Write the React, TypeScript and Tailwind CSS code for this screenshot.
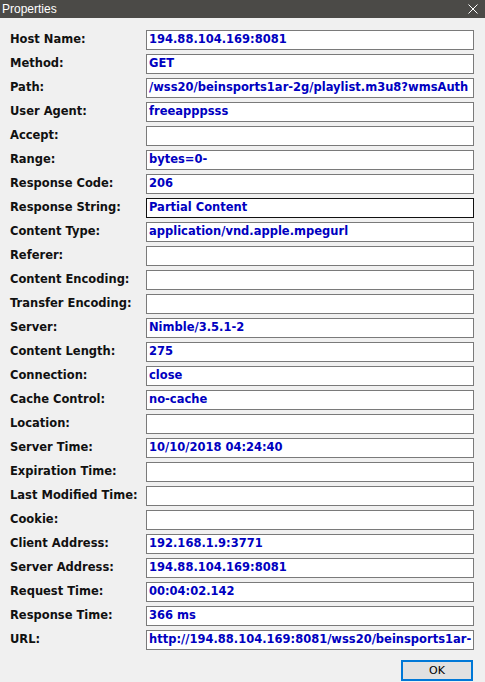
import React from "react";

const FIELDS: [string, string][] = [
  ["Host Name:", "194.88.104.169:8081"],
  ["Method:", "GET"],
  ["Path:", "/wss20/beinsports1ar-2g/playlist.m3u8?wmsAuth"],
  ["User Agent:", "freeapppsss"],
  ["Accept:", ""],
  ["Range:", "bytes=0-"],
  ["Response Code:", "206"],
  ["Response String:", "Partial Content"],
  ["Content Type:", "application/vnd.apple.mpegurl"],
  ["Referer:", ""],
  ["Content Encoding:", ""],
  ["Transfer Encoding:", ""],
  ["Server:", "Nimble/3.5.1-2"],
  ["Content Length:", "275"],
  ["Connection:", "close"],
  ["Cache Control:", "no-cache"],
  ["Location:", ""],
  ["Server Time:", "10/10/2018 04:24:40"],
  ["Expiration Time:", ""],
  ["Last Modified Time:", ""],
  ["Cookie:", ""],
  ["Client Address:", "192.168.1.9:3771"],
  ["Server Address:", "194.88.104.169:8081"],
  ["Request Time:", "00:04:02.142"],
  ["Response Time:", "366 ms"],
  ["URL:", "http://194.88.104.169:8081/wss20/beinsports1ar-"],
];

export default function App() {
  return (
    <div className="w-[485px] h-[682px] bg-[#f0f0f0] flex flex-col overflow-hidden">
      {/* title bar */}
      <div className="h-[18px] bg-[#4b4a47] flex items-center justify-between pl-[2px] pr-[7px]">
        <span className="text-white text-[12px] leading-none font-['Liberation_Sans',sans-serif]">Properties</span>
        <svg width="10" height="10" viewBox="0 0 10 10" className="text-white">
          <path d="M0.5 0.5 L9.5 9.5 M9.5 0.5 L0.5 9.5" stroke="currentColor" strokeWidth="1" fill="none" />
        </svg>
      </div>

      <div className="flex flex-col gap-1 pt-3 pl-[10px] font-['DejaVu_Sans',sans-serif] text-[11.5px] font-bold">
        {FIELDS.map(([label, value], i) => (
          <div key={i} className="flex items-center h-5">
            <div className="w-[136px] text-[#111] whitespace-nowrap">{label}</div>
            <div
              className={`w-[328px] h-5 bg-white border flex items-center pl-[2px] overflow-hidden whitespace-nowrap text-[#0000c0] ${
                label === "Response String:" ? "border-[#111]" : "border-[#7a7a7a]"
              }`}
            >
              {value}
            </div>
          </div>
        ))}
      </div>

      <div className="flex justify-end pr-[12px] pt-[10px]">
        <button className="w-[72px] h-[21px] bg-[#e1e1e1] border-2 border-[#0078d7] text-[11px] text-black font-['DejaVu_Sans',sans-serif] flex items-center justify-center leading-none">
          OK
        </button>
      </div>
    </div>
  );
}
